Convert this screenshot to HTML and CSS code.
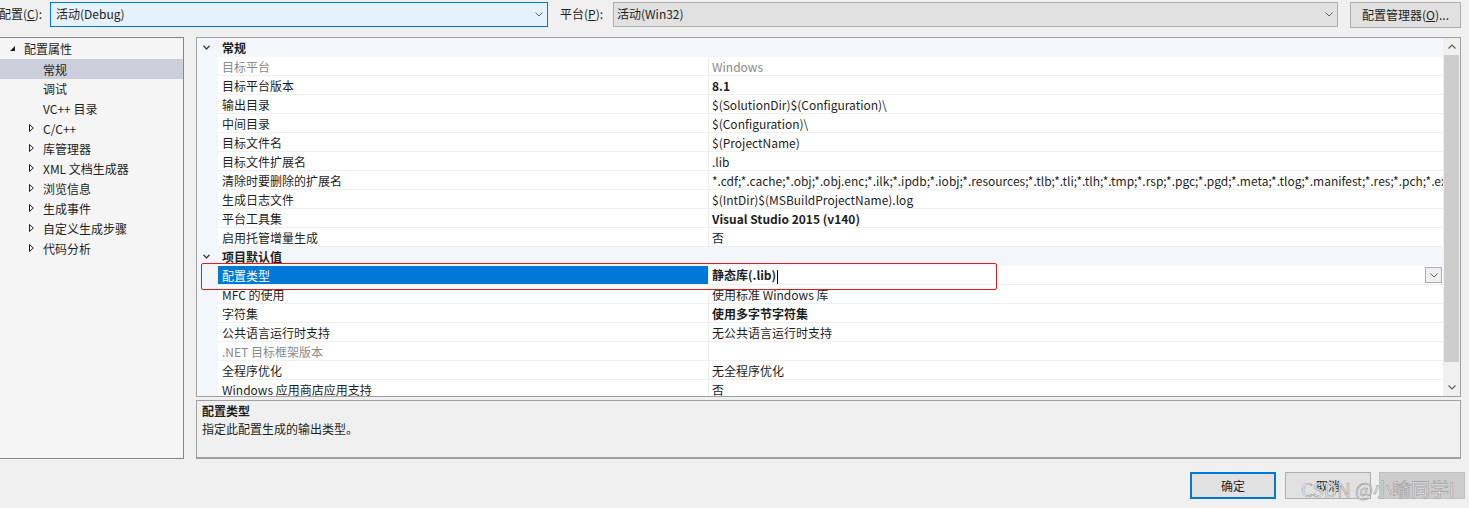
FILE: index.html
```html
<!DOCTYPE html>
<html lang="zh-CN">
<head>
    <meta charset="UTF-8">
    <title>属性页</title>
    <link rel="stylesheet" href="styles.css">
</head>
<body>
    <div class="toolbar">
        <span class="tb-label cfg-label">配置(<u>C</u>):</span>
        <div class="combo combo-active">
            <span>活动(Debug)</span>
            <svg width="8" height="5" viewBox="0 0 8 5"><path d="M0.5 0.5 L4 4 L7.5 0.5" fill="none" stroke="#606060"/></svg>
        </div>
        <span class="tb-label plat-label">平台(<u>P</u>):</span>
        <div class="combo combo-plat">
            <span>活动(Win32)</span>
            <svg width="8" height="5" viewBox="0 0 8 5"><path d="M0.5 0.5 L4 4 L7.5 0.5" fill="none" stroke="#606060"/></svg>
        </div>
        <button class="btn cfg-mgr">配置管理器(<u>O</u>)...</button>
    </div>

    <div class="main">
        <div class="tree">
            <div class="tree-item lvl0"><span class="tw"><svg width="5" height="5" viewBox="0 0 5 5"><path d="M5 0 L5 5 L0 5 Z" fill="#1e1e1e"/></svg></span>配置属性</div>
            <div class="tree-item lvl1 selected"><span class="tw"></span>常规</div>
            <div class="tree-item lvl1"><span class="tw"></span>调试</div>
            <div class="tree-item lvl1"><span class="tw"></span>VC++ 目录</div>
            <div class="tree-item lvl1"><span class="tw"><svg width="5" height="8" viewBox="0 0 5 8"><path d="M0.5 0.5 L4.3 4 L0.5 7.5 Z" fill="none" stroke="#1e1e1e"/></svg></span>C/C++</div>
            <div class="tree-item lvl1"><span class="tw"><svg width="5" height="8" viewBox="0 0 5 8"><path d="M0.5 0.5 L4.3 4 L0.5 7.5 Z" fill="none" stroke="#1e1e1e"/></svg></span>库管理器</div>
            <div class="tree-item lvl1"><span class="tw"><svg width="5" height="8" viewBox="0 0 5 8"><path d="M0.5 0.5 L4.3 4 L0.5 7.5 Z" fill="none" stroke="#1e1e1e"/></svg></span>XML 文档生成器</div>
            <div class="tree-item lvl1"><span class="tw"><svg width="5" height="8" viewBox="0 0 5 8"><path d="M0.5 0.5 L4.3 4 L0.5 7.5 Z" fill="none" stroke="#1e1e1e"/></svg></span>浏览信息</div>
            <div class="tree-item lvl1"><span class="tw"><svg width="5" height="8" viewBox="0 0 5 8"><path d="M0.5 0.5 L4.3 4 L0.5 7.5 Z" fill="none" stroke="#1e1e1e"/></svg></span>生成事件</div>
            <div class="tree-item lvl1"><span class="tw"><svg width="5" height="8" viewBox="0 0 5 8"><path d="M0.5 0.5 L4.3 4 L0.5 7.5 Z" fill="none" stroke="#1e1e1e"/></svg></span>自定义生成步骤</div>
            <div class="tree-item lvl1"><span class="tw"><svg width="5" height="8" viewBox="0 0 5 8"><path d="M0.5 0.5 L4.3 4 L0.5 7.5 Z" fill="none" stroke="#1e1e1e"/></svg></span>代码分析</div>
        </div>

        <div class="right">
            <div class="grid">
                <div class="grid-body">
                    <div class="cat">
                        <svg width="7" height="5" viewBox="0 0 7 5"><path d="M0.5 0.8 L3.5 4 L6.5 0.8" fill="none" stroke="#3c3c3c" stroke-width="1.3"/></svg>
                        <span>常规</span>
                    </div>
                    <div class="row disabled"><div class="gutter"></div><div class="name">目标平台</div><div class="val">Windows</div></div>
                    <div class="row"><div class="gutter"></div><div class="name">目标平台版本</div><div class="val bold">8.1</div></div>
                    <div class="row"><div class="gutter"></div><div class="name">输出目录</div><div class="val">$(SolutionDir)$(Configuration)\</div></div>
                    <div class="row"><div class="gutter"></div><div class="name">中间目录</div><div class="val">$(Configuration)\</div></div>
                    <div class="row"><div class="gutter"></div><div class="name">目标文件名</div><div class="val">$(ProjectName)</div></div>
                    <div class="row"><div class="gutter"></div><div class="name">目标文件扩展名</div><div class="val">.lib</div></div>
                    <div class="row"><div class="gutter"></div><div class="name">清除时要删除的扩展名</div><div class="val">*.cdf;*.cache;*.obj;*.obj.enc;*.ilk;*.ipdb;*.iobj;*.resources;*.tlb;*.tli;*.tlh;*.tmp;*.rsp;*.pgc;*.pgd;*.meta;*.tlog;*.manifest;*.res;*.pch;*.exp;*.idb;*.rep;*.xdc;*.pdb;*_manifest.rc;*.bsc;*.sbr;*.xml;*.metagen;*.bi</div></div>
                    <div class="row"><div class="gutter"></div><div class="name">生成日志文件</div><div class="val">$(IntDir)$(MSBuildProjectName).log</div></div>
                    <div class="row"><div class="gutter"></div><div class="name">平台工具集</div><div class="val bold">Visual Studio 2015 (v140)</div></div>
                    <div class="row"><div class="gutter"></div><div class="name">启用托管增量生成</div><div class="val">否</div></div>
                    <div class="cat">
                        <svg width="7" height="5" viewBox="0 0 7 5"><path d="M0.5 0.8 L3.5 4 L6.5 0.8" fill="none" stroke="#3c3c3c" stroke-width="1.3"/></svg>
                        <span>项目默认值</span>
                    </div>
                    <div class="row active">
                        <div class="gutter"></div>
                        <div class="name">配置类型</div>
                        <div class="val">
                            <span class="bold">静态库(.lib)<span class="caret"></span></span>
                            <span class="drop-btn"><svg width="8" height="5" viewBox="0 0 8 5"><path d="M0.5 0.5 L4 4 L7.5 0.5" fill="none" stroke="#606060"/></svg></span>
                        </div>
                    </div>
                    <div class="row"><div class="gutter"></div><div class="name">MFC 的使用</div><div class="val">使用标准 Windows 库</div></div>
                    <div class="row"><div class="gutter"></div><div class="name">字符集</div><div class="val bold">使用多字节字符集</div></div>
                    <div class="row"><div class="gutter"></div><div class="name">公共语言运行时支持</div><div class="val">无公共语言运行时支持</div></div>
                    <div class="row disabled"><div class="gutter"></div><div class="name">.NET 目标框架版本</div><div class="val"></div></div>
                    <div class="row"><div class="gutter"></div><div class="name">全程序优化</div><div class="val">无全程序优化</div></div>
                    <div class="row"><div class="gutter"></div><div class="name">Windows 应用商店应用支持</div><div class="val">否</div></div>
                </div>
                <div class="vscroll">
                    <div class="sb-btn"><svg width="8" height="5" viewBox="0 0 8 5"><path d="M0.5 4.5 L4 1 L7.5 4.5" fill="none" stroke="#606060" stroke-width="1.2"/></svg></div>
                    <div class="sb-thumb"></div>
                    <div class="sb-track"></div>
                    <div class="sb-btn"><svg width="8" height="5" viewBox="0 0 8 5"><path d="M0.5 0.5 L4 4 L7.5 0.5" fill="none" stroke="#606060" stroke-width="1.2"/></svg></div>
                </div>
            </div>

            <div class="desc">
                <div class="desc-title">配置类型</div>
                <div class="desc-text">指定此配置生成的输出类型。</div>
            </div>
        </div>
    </div>

    <div class="footer">
        <button class="btn default-btn">确定</button>
        <button class="btn">取消</button>
        <button class="btn disabled-btn"></button>
    </div>

    <div class="highlight"></div>
    <div class="watermark">CSDN @小喻同学i</div>
</body>
</html>
```

FILE: styles.css
```css
body {
    margin: 0;
    padding: 0;
    width: 1469px;
    height: 508px;
    overflow: hidden;
    position: relative;
    background-color: #f0f0f0;
    color: #1e1e1e;
    font-family: "Noto Sans CJK SC", "Microsoft YaHei", sans-serif;
    font-size: 12px;
}
.toolbar {
    height: 37px;
    box-sizing: border-box;
    padding-top: 2px;
    display: flex;
    align-items: flex-start;
}
.tb-label {
    line-height: 23px;
    white-space: nowrap;
}
.cfg-label {
    width: 51px;
    margin-left: -1px;
}
.plat-label {
    width: 53px;
    margin-left: 12px;
}
.combo {
    height: 25px;
    box-sizing: border-box;
    display: flex;
    align-items: center;
    justify-content: space-between;
    padding: 0 4px 0 5px;
}
.combo span {
    margin-top: -2px;
}
.combo-active {
    width: 498px;
    background-color: #e5f1fb;
    border: 1px solid #0078d7;
}
.combo-plat {
    width: 725px;
    padding-left: 3px;
    padding-right: 4px;
    background-color: #e1e1e1;
    border: 1px solid #adadad;
}
.btn {
    font-family: inherit;
    font-size: 12px;
    color: #1e1e1e;
    background-color: #e1e1e1;
    border: 1px solid #adadad;
    padding: 0;
    box-sizing: border-box;
}
.cfg-mgr {
    width: 111px;
    height: 26px;
    margin-left: 12px;
    padding-bottom: 2px;
}
.main {
    display: flex;
}
.tree {
    width: 184px;
    height: 422px;
    box-sizing: border-box;
    border: 1px solid #828790;
    border-left: none;
    background-color: #f5f5f5;
}
.tree-item {
    height: 20px;
    display: flex;
    align-items: center;
    white-space: nowrap;
}
.tw {
    width: 14px;
    display: flex;
    align-items: center;
}
.lvl0 {
    padding-left: 10px;
}
.lvl0 .tw svg {
    margin-top: 1px;
}
.lvl1 {
    padding-left: 29px;
}
.tree-item.selected {
    background-color: #cccedb;
    margin-top: 1px;
    margin-bottom: -1px;
}
.right {
    margin-left: 12px;
    width: 1265px;
}
.grid {
    height: 360px;
    box-sizing: border-box;
    border: 1px solid #a0a0a0;
    background-color: #ffffff;
    display: flex;
}
.grid-body {
    flex: 1;
    overflow: hidden;
}
.cat {
    height: 19px;
    background-color: #f3f6fb;
    display: flex;
    align-items: center;
    font-weight: bold;
}
.cat svg {
    margin-left: 6px;
}
.cat span {
    margin-left: 12px;
}
.row {
    display: grid;
    grid-template-columns: 21px 490px 1fr;
    height: 19px;
}
.gutter {
    background-color: #f3f6fb;
}
.name, .val {
    border-bottom: 1px solid #f0f0f0;
    padding-top: 2px;
    line-height: 16px;
    box-sizing: border-box;
    white-space: nowrap;
    overflow: hidden;
}
.name {
    padding-left: 4px;
}
.val {
    border-left: 1px solid #f0f0f0;
    padding-left: 3px;
}
.bold {
    font-weight: bold;
}
.disabled .name, .disabled .val {
    color: #8a8a8a;
}
.active .name {
    background-color: #0078d7;
    color: #ffffff;
}
.active .val {
    display: flex;
    align-items: center;
    justify-content: space-between;
    padding-top: 0;
}
.active .val .bold {
    margin-top: 2px;
}
.caret {
    display: inline-block;
    width: 1px;
    height: 15px;
    background-color: #000000;
    vertical-align: middle;
    margin-left: 1px;
}
.drop-btn {
    width: 17px;
    height: 16px;
    box-sizing: border-box;
    border: 1px solid #adadad;
    background-color: #f0f0f0;
    display: flex;
    align-items: center;
    justify-content: center;
    margin-right: 1px;
}
.vscroll {
    width: 17px;
    background-color: #f0f0f0;
    display: flex;
    flex-direction: column;
}
.sb-btn {
    height: 17px;
    display: flex;
    align-items: center;
    justify-content: center;
}
.sb-thumb {
    height: 307px;
    margin: 0 1px;
    background-color: #cdcdcd;
}
.sb-track {
    flex: 1;
}
.desc {
    margin-top: 3px;
    height: 59px;
    box-sizing: border-box;
    border: 1px solid #a0a0a0;
    border-bottom: 2px solid #a0a0a0;
    padding: 1px 5px 0;
}
.desc-title {
    font-weight: bold;
    line-height: 18px;
}
.desc-text {
    line-height: 18px;
}
.footer {
    margin-top: 13px;
    display: flex;
    justify-content: flex-end;
    padding-right: 4px;
}
.footer .btn {
    width: 86px;
    height: 27px;
    margin-left: 9px;
}
.footer .default-btn {
    border: 2px solid #0078d7;
}
.footer .disabled-btn {
    margin-left: 8px;
    background-color: #cccccc;
    border-color: #bfbfbf;
}
.highlight {
    position: absolute;
    left: 201px;
    top: 263px;
    width: 796px;
    height: 27px;
    box-sizing: border-box;
    border: 1px solid #e51a1a;
    border-radius: 2px;
}
.watermark {
    position: absolute;
    left: 1301px;
    top: 475px;
    font-size: 19px;
    line-height: 28px;
    color: #eeeeee;
    -webkit-text-stroke: 0.6px #9a9a9a;
    white-space: nowrap;
}
```
